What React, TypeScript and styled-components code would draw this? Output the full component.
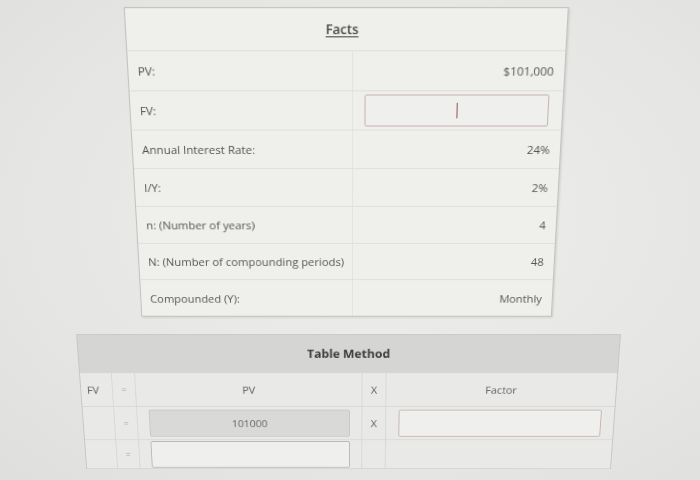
import React from "react";
import styled, { createGlobalStyle } from "styled-components";

const GlobalStyle = createGlobalStyle`
  html, body {
    margin: 0;
    padding: 0;
    width: 700px;
    height: 480px;
    overflow: hidden;
    background: radial-gradient(ellipse at 55% 45%, #eeefec 0%, #e7e8e5 55%, #dfe0dd 100%);
    font-family: "Open Sans", "Liberation Sans", sans-serif;
  }
`;

const Stage = styled.div`
  width: 700px;
  height: 480px;
  padding-top: 13px;
  box-sizing: border-box;
  transform-origin: 350px 240px;
  transform: perspective(1000px) rotateX(-15deg);
`;

const FactsTable = styled.div`
  margin-left: 137px;
  width: 419px;
  background: #efefec;
  border: 1px solid #c2c3c0;
  box-shadow: 1px 1px 2px rgba(0, 0, 0, 0.12);
  box-sizing: border-box;
`;

const FactsHeader = styled.div`
  height: 40px;
  display: flex;
  align-items: center;
  justify-content: center;
  padding-right: 8px;
  border-bottom: 1px solid #dfdfdb;
  box-sizing: border-box;
`;

const HeaderTitle = styled.span`
  font-size: 12.5px;
  font-weight: 600;
  color: #474747;
  text-decoration: underline;
  text-underline-offset: 2px;
`;

const FactRow = styled.div`
  display: grid;
  grid-template-columns: 215px 1fr;
  height: 38px;
  border-bottom: 1px solid #dfdfdb;
  box-sizing: border-box;
  &:last-child {
    border-bottom: none;
  }
`;

const FactLabel = styled.div`
  display: flex;
  align-items: center;
  padding-left: 9px;
  border-right: 1px solid #e3e3df;
  font-size: 11.3px;
  color: #555;
  white-space: nowrap;
`;

const FactValue = styled.div`
  display: flex;
  align-items: center;
  justify-content: flex-end;
  padding-right: 10px;
  font-size: 11.3px;
  color: #555;
`;

const FactInputCell = styled.div`
  display: flex;
  align-items: center;
  padding: 0 13px 0 11px;
`;

const TextBox = styled.div<{ $filled?: boolean }>`
  flex: 1;
  height: 31px;
  box-sizing: border-box;
  display: flex;
  align-items: center;
  justify-content: center;
  border: 1px solid ${(p) => (p.$filled ? "#c9cac6" : "#c4b6b2")};
  border-radius: 2px;
  background: ${(p) => (p.$filled ? "#d9dad7" : "#efefed")};
  font-size: 11px;
  color: #666;
`;

const Caret = styled.span`
  width: 1px;
  height: 15px;
  background: #a2504c;
`;

const TMTable = styled.div`
  margin: 19px 0 0 69px;
  width: 559px;
  background: #e9eae7;
  border: 1px solid #c6c7c4;
  box-sizing: border-box;
`;

const TMHeader = styled.div`
  height: 41px;
  display: flex;
  align-items: center;
  justify-content: center;
  background: #d5d6d3;
  font-size: 12.5px;
  font-weight: 700;
  color: #3c3c3c;
`;

const TMRow = styled.div<{ $h: number }>`
  display: grid;
  grid-template-columns: 33px 24px 236px 25px 1fr;
  height: ${(p) => p.$h}px;
  border-top: 1px solid #d8d9d5;
  box-sizing: border-box;
`;

const TMCell = styled.div<{ $align?: "start" | "center"; $pad?: number; $last?: boolean }>`
  display: flex;
  align-items: center;
  justify-content: ${(p) => (p.$align === "start" ? "flex-start" : "center")};
  padding: 0 ${(p) => p.$pad ?? 0}px;
  border-right: ${(p) => (p.$last ? "none" : "1px solid #d8d9d5")};
  font-size: 11.3px;
  color: #5e5e5e;
  min-width: 0;
`;

const Eq = styled.span`
  font-size: 9px;
  color: #9a9a98;
`;

const facts: { label: string; value: string }[] = [
  { label: "PV:", value: "$101,000" },
  { label: "FV:", value: "" },
  { label: "Annual Interest Rate:", value: "24%" },
  { label: "I/Y:", value: "2%" },
  { label: "n: (Number of years)", value: "4" },
  { label: "N: (Number of compounding periods)", value: "48" },
  { label: "Compounded (Y):", value: "Monthly" },
];

export default function App() {
  return (
    <>
      <GlobalStyle />
      <Stage>
        <FactsTable>
          <FactsHeader>
            <HeaderTitle>Facts</HeaderTitle>
          </FactsHeader>
          {facts.map((f) => (
            <FactRow key={f.label}>
              <FactLabel>{f.label}</FactLabel>
              {f.label === "FV:" ? (
                <FactInputCell>
                  <TextBox>
                    <Caret />
                  </TextBox>
                </FactInputCell>
              ) : (
                <FactValue>{f.value}</FactValue>
              )}
            </FactRow>
          ))}
        </FactsTable>

        <TMTable>
          <TMHeader>Table Method</TMHeader>
          <TMRow $h={38}>
            <TMCell $align="start" $pad={6}>FV</TMCell>
            <TMCell><Eq>=</Eq></TMCell>
            <TMCell>PV</TMCell>
            <TMCell>X</TMCell>
            <TMCell $last>Factor</TMCell>
          </TMRow>
          <TMRow $h={38}>
            <TMCell />
            <TMCell><Eq>=</Eq></TMCell>
            <TMCell $pad={12}>
              <TextBox $filled>101000</TextBox>
            </TMCell>
            <TMCell>X</TMCell>
            <TMCell $last $pad={13}>
              <TextBox />
            </TMCell>
          </TMRow>
          <TMRow $h={34}>
            <TMCell />
            <TMCell><Eq>=</Eq></TMCell>
            <TMCell $pad={12}>
              <TextBox />
            </TMCell>
            <TMCell />
            <TMCell $last />
          </TMRow>
        </TMTable>
      </Stage>
    </>
  );
}
